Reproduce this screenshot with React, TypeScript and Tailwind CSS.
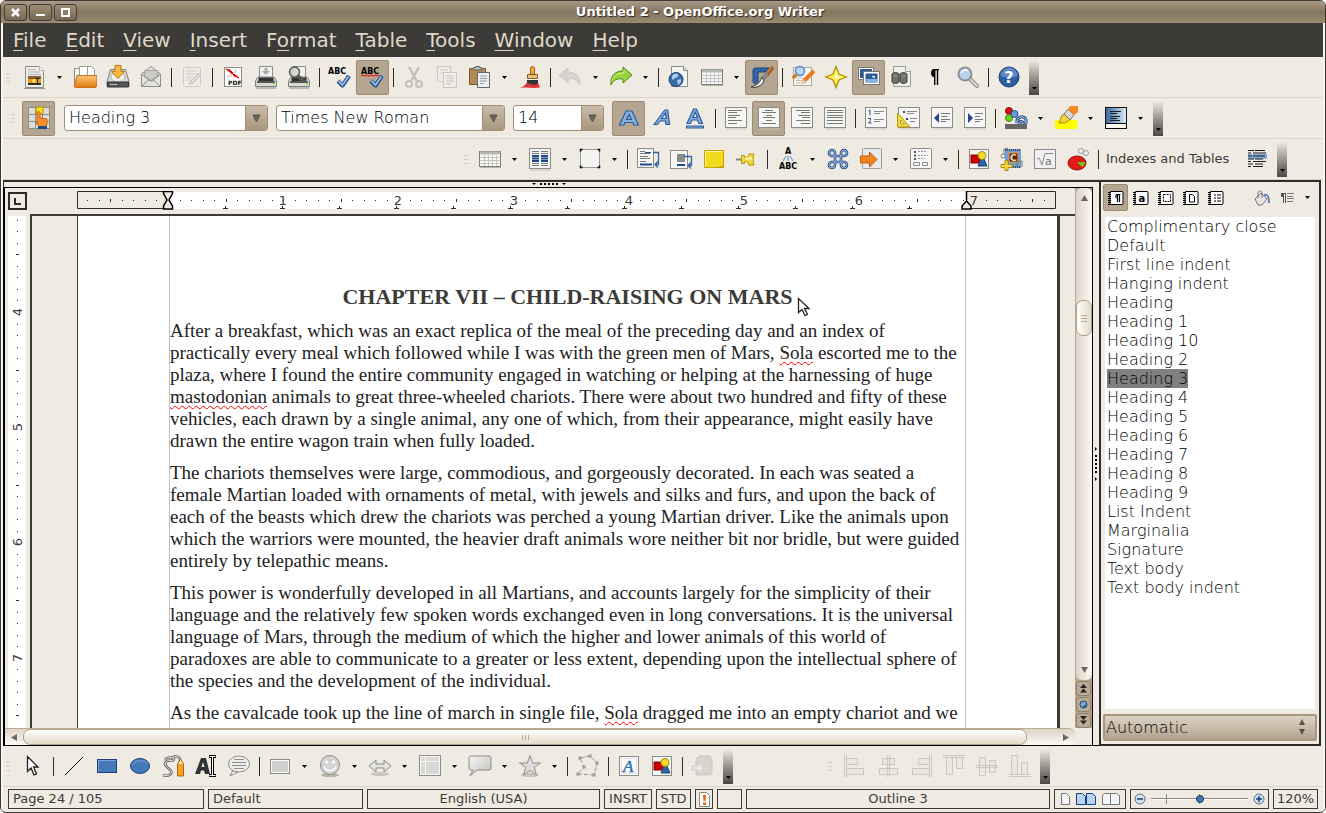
import type { ReactNode } from 'react'
import { clsx } from 'clsx'

const MENUS = ['File', 'Edit', 'View', 'Insert', 'Format', 'Table', 'Tools', 'Window', 'Help']
// position of the underlined access key
const ACCESS_KEY: Record<string, number> = { Format: 1 }

const STYLES = [
  'Complimentary close', 'Default', 'First line indent', 'Hanging indent', 'Heading', 'Heading 1',
  'Heading 10', 'Heading 2', 'Heading 3', 'Heading 4', 'Heading 5', 'Heading 6', 'Heading 7',
  'Heading 8', 'Heading 9', 'List Indent', 'Marginalia', 'Signature', 'Text body', 'Text body indent',
]

const PARAGRAPHS = [
  [
    'After a breakfast, which was an exact replica of the meal of the preceding day and an index of',
    'practically every meal which followed while I was with the green men of Mars, Sola escorted me to the',
    'plaza, where I found the entire community engaged in watching or helping at the harnessing of huge',
    'mastodonian animals to great three-wheeled chariots. There were about two hundred and fifty of these',
    'vehicles, each drawn by a single animal, any one of which, from their appearance, might easily have',
    'drawn the entire wagon train when fully loaded.',
  ],
  [
    'The chariots themselves were large, commodious, and gorgeously decorated. In each was seated a',
    'female Martian loaded with ornaments of metal, with jewels and silks and furs, and upon the back of',
    'each of the beasts which drew the chariots was perched a young Martian driver. Like the animals upon',
    'which the warriors were mounted, the heavier draft animals wore neither bit nor bridle, but were guided',
    'entirely by telepathic means.',
  ],
  [
    'This power is wonderfully developed in all Martians, and accounts largely for the simplicity of their',
    'language and the relatively few spoken words exchanged even in long conversations. It is the universal',
    'language of Mars, through the medium of which the higher and lower animals of this world of',
    'paradoxes are able to communicate to a greater or less extent, depending upon the intellectual sphere of',
    'the species and the development of the individual.',
  ],
  ['As the cavalcade took up the line of march in single file, Sola dragged me into an empty chariot and we'],
]

const INCH = 115.2

/* ---------- icons ---------- */

function Ico({ children, dim }: { children: ReactNode; dim?: boolean }) {
  return (
    <svg width="24" height="24" viewBox="0 0 24 24" fill="none" className={clsx('shrink-0', dim && 'opacity-35')}>
      {children}
    </svg>
  )
}

function Frame({ children }: { children?: ReactNode }) {
  return (
    <Ico>
      <rect x="1.500" y="1.500" width="21" height="20" fill="#f6f6f4" stroke="#8b8d88" />
      <path d="M2.500 23h20" stroke="#c9c4ba" />
      {children}
    </Ico>
  )
}

const NewDoc = () => (
  <Ico>
    <path d="M2.500 1.500h14l4 4v17h-18z" fill="#ececea" stroke="#8b8d88" />
    <path d="M16.500 1.500v4h4" fill="#fff" stroke="#b5b7b3" />
    <path d="M5 4.500h8M5 7h12M5 9.500h13" stroke="#b5b7b3" />
    <rect x="5" y="11" width="13" height="9" fill="#85602a" />
    <path d="M5 14h13v4H5z" fill="#e9991c" />
    <circle cx="11" cy="16" r="2" fill="#ffd75a" />
    <path d="M5 18h13v2H5z" fill="#2f3020" />
    <path d="M14.500 13v6M12.500 13.500h4" stroke="#2d1d05" />
    <path d="M1 23.500h21" stroke="#9a968e" />
  </Ico>
)
const OpenDoc = () => (
  <Ico>
    <path d="M1.500 21V3.500h7l1 2h5V2.500h4l3 3v7" fill="#f3f3f1" stroke="#8b8d88" />
    <path d="M6.500 1.500h8l3 3v7h-11z" fill="#fff" stroke="#9a9c97" />
    <path d="M14.500 1.500h4l3 3v6h-7z" fill="#fff" stroke="#9a9c97" />
    <path d="M1 21.500l3-11h20l-.500 11-1 1h-20z" fill="url(#folder)" stroke="#c8701a" />
    <defs>
      <linearGradient id="folder" x1="0" y1="0" x2="0" y2="1">
        <stop stopColor="#fbc878" /><stop offset="1" stopColor="#e0780f" />
      </linearGradient>
    </defs>
  </Ico>
)
const SaveDoc = () => (
  <Ico>
    <path d="M4.500 4.500h15l3.500 12v5h-22v-5z" fill="#d5d7d3" stroke="#7f817c" />
    <ellipse cx="12" cy="12" rx="7" ry="5" fill="#eeeeec" stroke="#b0b2ae" />
    <path d="M1.500 17h21v5h-21z" fill="#555753" stroke="#2e3436" />
    <path d="M4 19.500h7" stroke="#babdb6" />
    <path d="M9 .500h6v6h3.500L12 13.500 5.500 6.500H9z" fill="#f9b93c" stroke="#b8770d" />
  </Ico>
)
const Mail = () => (
  <Ico>
    <path d="M2.500 9L12 1.500 21.500 9v12.500h-19z" fill="#e3e4e1" stroke="#8b8d88" />
    <path d="M5.500 5.500h13v6L12 15.500 5.500 11.500z" fill="#c9cbc7" stroke="#9fa19c" />
    <path d="M3 9.500l8 6.500h2l8-6.500M3 21l6.500-6M21 21l-6.500-6" stroke="#8b8d88" />
  </Ico>
)
const EditDoc = () => (
  <Ico dim>
    <rect x="3.500" y="2.500" width="17" height="19" rx="1" fill="#eee" stroke="#999" />
    <path d="M6 6h10M6 9h12M6 12h8M6 15h5" stroke="#999" />
    <path d="M19 8l2 2-8 8-3.500 1L11 16z" fill="#ccc" stroke="#666" />
  </Ico>
)
const Pdf = () => (
  <Ico>
    <rect x="3.500" y="2.500" width="17" height="19" fill="#fff" stroke="#8b8d88" />
    <path d="M5 4l4 1 4 4 5 4-5-2-3-3z" fill="#e01010" stroke="#e01010" />
    <path d="M15 4c-1 4-4 7-9 8" stroke="#f19a9a" />
    <rect x="7" y="14" width="13" height="7" fill="#fff" />
    <text x="7" y="20" fontSize="6" fontWeight="bold" fontFamily="DejaVu Sans" fill="#111">PDF</text>
  </Ico>
)
function Printer({ preview }: { preview?: boolean }) {
  return (
    <Ico>
      <path d="M5.500 1.500h13v11h-13z" fill="#f2f2f0" stroke="#8b8d88" />
      {!preview && <path d="M10.500 3h3v3h2.500l-4 4-4-4h2.500z" fill="#a9aba7" />}
      <path d="M4 12h16l2.500 4v5.500h-21V16z" fill="#d9dad6" stroke="#7f817c" />
      <path d="M4.500 12.500h15v4h-15z" fill="#2e3436" />
      <path d="M3 17h18" stroke="#555753" strokeWidth="2" />
      <circle cx="20" cy="18.500" r="1" fill="#73d216" />
      <path d="M2 23h20" stroke="#888a85" />
      {preview && (
        <>
          <path d="M10 10l8 7" stroke="#555753" strokeWidth="3" />
          <circle cx="7.500" cy="7" r="5" fill="#cfd1cd" fillOpacity=".8" stroke="#555753" strokeWidth="1.500" />
        </>
      )}
    </Ico>
  )
}
function Spell({ auto }: { auto?: boolean }) {
  return (
    <Ico>
      <text x="0" y="9" fontSize="8" fontWeight="bold" fontFamily="DejaVu Sans" fill="#000">ABC</text>
      {auto && <path d="M0 11l2-1 2 1 2-1 2 1 2-1 2 1 2-1 2 1 2-1" stroke="#e00" />}
      <path d="M10 16l4.500 4.500L21 11" stroke="#204a87" strokeWidth="4" strokeLinejoin="round" />
      <path d="M10.500 16l4 4L20.500 11.500" stroke="#8db8e8" strokeWidth="2" />
    </Ico>
  )
}
const Cut = () => (
  <Ico dim>
    <path d="M7 2l8 14M17 2L9 16" stroke="#777" strokeWidth="2.500" />
    <circle cx="7" cy="19" r="3" stroke="#777" strokeWidth="2" />
    <circle cx="17" cy="19" r="3" stroke="#777" strokeWidth="2" />
  </Ico>
)
const Copy = () => (
  <Ico dim>
    <path d="M2.500 1.500h13v15h-13z" fill="#eee" stroke="#888" />
    <path d="M5 5h8M5 8h3" stroke="#999" />
    <path d="M8.500 7.500h13v15h-13z" fill="#eee" stroke="#888" />
    <path d="M11 11h8M11 13.500h8M11 16h8M11 18.500h5" stroke="#888" />
  </Ico>
)
const Paste = () => (
  <Ico>
    <path d="M1.500 3.500h16v16h-16z" fill="#b18a55" stroke="#7c5a2a" />
    <path d="M5.500 5V2.500h2v-1h4v1h2V5z" fill="#babdb6" stroke="#666" />
    <path d="M9.500 7.500h12v15h-12z" fill="#eef0f4" stroke="#666864" />
    <path d="M12 11h7M12 13.500h7M12 16h7M12 18.500h4" stroke="#8a96ab" />
  </Ico>
)
const Brush = () => (
  <Ico>
    <path d="M1 22.500c5 0 7-4 8-5h11l2 5c-5 1-14 0-21 0z" fill="#e0303a" />
    <path d="M12.500 9V3c0-2 4-2 4 0v6z" fill="#f3a841" stroke="#a86412" />
    <path d="M9.500 9.500h10v4h-10z" fill="#e5c07c" stroke="#8c5d1d" />
    <path d="M9 14h11v4l-3 2-8-2z" fill="#2e3436" />
    <path d="M9 14.500h11" stroke="#eee" />
  </Ico>
)
const Undo = () => (
  <Ico dim>
    <path d="M0 10l9-7v4c7 0 12 4 12 13-2-5-6-7-12-6v4z" fill="#aaa" stroke="#888" />
  </Ico>
)
const Redo = () => (
  <Ico>
    <path d="M23 10l-9-8v4C6 6 1 11 2 20c2-5 6-7 12-6v4z" fill="#97d43c" stroke="#4e8a0b" />
    <path d="M15 5v3C8 8 4 11 3 16" stroke="#cdf08d" />
  </Ico>
)
const Hyperlink = () => (
  <Ico>
    <path d="M4.500 1.500h12l4 4v16h-16z" fill="#f4f4f2" stroke="#8b8d88" />
    <path d="M16.500 1.500v4h4" fill="#ddd" stroke="#8b8d88" />
    <circle cx="9" cy="14.500" r="7" fill="#3a6ca8" stroke="#1c4378" />
    <path d="M5 11c2-3 5-3 6-1s-2 3-3 3-1 3-3 1zM10 15l4-1c1 2-1 5-3 6z" fill="#a9c8e8" />
  </Ico>
)
const Grid = () => (
  <Ico>
    <rect x="1.500" y="4.500" width="21" height="15" fill="#fafaf9" stroke="#7f817c" />
    <path d="M2 6h20" stroke="#b5b7b3" strokeWidth="3" />
    <path d="M2 10.500h20M2 13.500h20M2 16.500h20M6.500 8v11M10.500 8v11M14.500 8v11M18.500 8v11" stroke="#c3c5c1" />
    <path d="M2 20.500h21" stroke="#b5b2aa" />
  </Ico>
)
const DrawBrush = () => (
  <Ico>
    <path d="M5 3h16c0 3-2 4-5 4H8v10c-2 2-4 2-5 0V6c0-2 1-3 2-3z" fill="#3465a4" stroke="#1d4277" />
    <path d="M23 2l-7 9" stroke="#a8622a" strokeWidth="4" />
    <path d="M21 2l-6 8" stroke="#e39b55" />
    <path d="M17 9l-4 5" stroke="#888a85" strokeWidth="5" />
    <path d="M12 12c-2 5-4 8-11 10 5 1 10 0 13-6z" fill="#f3f3f1" stroke="#3a3a38" />
  </Ico>
)
const FindReplace = () => (
  <Ico>
    <rect x="2.500" y="2.500" width="18" height="18" fill="#f6f6f4" stroke="#a5a7a3" />
    <path d="M5 13h8M5 15.500h9M5 18h10" stroke="#babdb6" />
    <circle cx="9" cy="6" r="4.500" fill="#bcd5f0" stroke="#5b87bd" strokeWidth="1.500" />
    <path d="M5.500 10L1.500 13" stroke="#c17d11" strokeWidth="3" />
    <path d="M23 6L13 16" stroke="#f07818" strokeWidth="4" />
    <path d="M12 14l3 3-5 2z" fill="#e8c79a" />
  </Ico>
)
const Navigator = () => (
  <Ico>
    <path d="M12 1.500l3 7.500 7.500 3-7.500 3-3 7.500-3-7.500-7.500-3 7.500-3z" fill="#fbe94e" stroke="#b09208" strokeWidth="1.300" />
    <path d="M12 4l1.500 6.500L12 12zM20 12l-6.500 1.500L12 12z" fill="#fffbd0" />
    <circle cx="12" cy="12" r="1.500" fill="#fff" />
  </Ico>
)
const Gallery = () => (
  <Ico>
    <rect x="1.500" y="2.500" width="15" height="12" fill="#fff" stroke="#777" />
    <rect x="3" y="4" width="12" height="9" fill="#2c5a98" />
    <rect x="6.500" y="6.500" width="16" height="13" fill="#fff" stroke="#777" />
    <rect x="8.500" y="8.500" width="12" height="9" fill="#2c5a98" />
    <path d="M9 17v-3h11v3z" fill="#88b4e2" />
    <path d="M15 11l3 1-2 1" stroke="#fff" />
  </Ico>
)
const DataSources = () => (
  <Ico>
    <path d="M3.500 1.500h12l5 5v15h-17z" fill="#efefed" stroke="#9a9c97" />
    <path d="M15.500 1.500v5h5" fill="#fff" stroke="#9a9c97" />
    <path d="M2 9c2-2 5-2 7 0v8c-2 2-5 2-7 0zM10 9c2-2 5-2 7 0v8c-2 2-5 2-7 0z" fill="#6f716d" stroke="#3c3d3a" />
    <path d="M3 10.500c2 1 3 1 5 0M11 10.500c2 1 3 1 5 0" stroke="#999" />
  </Ico>
)
const Pilcrow = () => (
  <Ico>
    <path d="M11 4h5v1.200h-.800V20h-1.400V5.200h-1.400V20H11v-8c-4 0-4-8 0-8z" fill="#000" />
  </Ico>
)
const Zoom = () => (
  <Ico>
    <path d="M14 14l7 7" stroke="#8b8d88" strokeWidth="4" strokeLinecap="round" />
    <path d="M14 14l7 7" stroke="#dcdcda" strokeWidth="2" strokeLinecap="round" />
    <circle cx="9" cy="9" r="6.500" fill="#b7d0ec" stroke="#8b9199" strokeWidth="2" />
    <path d="M5 8c1-3 5-4 7-2" stroke="#fff" strokeWidth="1.500" />
  </Ico>
)
const Help = () => (
  <Ico>
    <circle cx="12" cy="12" r="10" fill="#2e5fa3" stroke="#163d75" />
    <path d="M3.500 11a8.500 8.500 0 0117 0c-5 2-12 2-17 0z" fill="#5e8ac4" />
    <text x="12" y="18" textAnchor="middle" fontSize="16" fontWeight="bold" fontFamily="DejaVu Sans" fill="#fff">?</text>
  </Ico>
)

const StylesIcon = () => (
  <Ico>
    <rect x="1.500" y="1.500" width="21" height="21" fill="#dcdcda" stroke="#8b8d88" />
    <path d="M2 8.500h20M2 15.500h20M8.500 2v20M15.500 2v20" stroke="#8b8d88" />
    <rect x="9" y="1" width="7" height="7" fill="#fce113" stroke="#b09208" />
    <path d="M10 18V7c0-2 3-2 3 0v5l7 1v6l-2 2h-6l-3-5z" fill="#f7902a" stroke="#c3600c" />
    <rect x="11" y="20" width="9" height="3" fill="#204a87" />
  </Ico>
)
function BlueA({ kind }: { kind: 'b' | 'i' | 'u' }) {
  return (
    <Ico>
      <g transform={kind === 'i' ? 'translate(5 1) skewX(-16)' : undefined}>
        <path
          d={kind === 'b'
            ? 'M2.500 19L9 5h6l6.500 14h-4.500l-1-2.500H8L7 19zM9.500 13.500h5L12 8.500z'
            : 'M4 17.500L10.500 3h3l6 14.500h-3.500l-1.500-3.500H9l-1.500 3.500zM10 11.500h4.500L12 6z'}
          fill="#86aede" fillRule="evenodd" stroke="#2b5b9f" strokeWidth="1.200"
        />
      </g>
      {kind === 'u' && <path d="M3 21h18" stroke="#2b5b9f" strokeWidth="3" />}
      {kind === 'u' && <path d="M4 21h16" stroke="#86aede" />}
    </Ico>
  )
}
const AlignLeft = () => <Frame><path d="M4 4.500h14M4 6.500h9M4 9.500h12M4 11.500h8M4 14.500h14M4 17.500h9" stroke="#777975" /></Frame>
const AlignCenter = () => <Frame><path d="M8 4.500h8M5 6.500h14M9 9.500h6M6 11.500h12M9 14.500h6M5 17.500h14" stroke="#777975" /></Frame>
const AlignRight = () => <Frame><path d="M6 4.500h14M11 6.500h9M8 9.500h12M12 11.500h8M6 14.500h14M11 17.500h9" stroke="#777975" /></Frame>
const AlignJustify = () => <Frame><path d="M4 4.500h16M4 6.500h16M4 9.500h16M4 11.500h16M4 14.500h16M4 17.500h16" stroke="#777975" /></Frame>
const Numbering = () => (
  <Frame>
    <path d="M10 5.500h10M10 7.500h6M10 13.500h10M10 15.500h6" stroke="#888a85" />
    <path d="M6 4v5M4.500 5l1.500-1M4 12.500h2.500v2L4.500 17h3" stroke="#204a87" />
  </Frame>
)
const Bullets = () => (
  <Frame>
    <path d="M10 5.500h10M10 7.500h7M13 12.500h7M13 15.500h5" stroke="#888a85" />
    <path d="M6 6h2M9 13h2" stroke="#444" strokeWidth="2" />
    <path d="M.500 7v14H13z" fill="#f5dc3c" stroke="#b8960a" />
    <path d="M3.500 14v4h4z" fill="#f6f6f4" stroke="#b8960a" />
  </Frame>
)
const Outdent = () => <Frame><path d="M4 12l5-5v10z" fill="#204a87" /><path d="M11 7.500h9M11 10.500h6M11 13.500h9M11 15.500h5" stroke="#777975" /></Frame>
const Indent = () => <Frame><path d="M10 12L5 7v10z" fill="#204a87" /><path d="M12 7.500h8M12 10.500h5M12 13.500h8M12 15.500h5" stroke="#777975" /></Frame>
const FontColor = () => (
  <Ico>
    <circle cx="5" cy="5" r="3.500" fill="#d41118" stroke="#860a0e" />
    <circle cx="5" cy="12" r="3.500" fill="#6ed216" stroke="#3f8a0b" />
    <circle cx="10.500" cy="8" r="3.500" fill="#6b9bd6" stroke="#204a87" />
    <path d="M13 17c-1-7 8-8 9-3v4M15 18c1-4 4-3 4 0" stroke="#204a87" strokeWidth="3" />
    <path d="M13 17c-1-7 8-8 9-3v4M15 18c1-4 4-3 4 0" stroke="#d3e3f5" />
    <rect x="1" y="18" width="22" height="5" fill="#666" />
  </Ico>
)
const Highlight = () => (
  <Ico>
    <rect x="1" y="14" width="22" height="9" fill="#ff0" />
    <path d="M5 17l3-8 7-2 2 6-6 4z" fill="#f3d437" stroke="#a88a0a" />
    <path d="M10 8l4-5 6 6-4 5z" fill="#d3d5d1" stroke="#777" />
    <path d="M14 3l2-3h8v6l-4 3z" fill="#f78b1f" />
  </Ico>
)
const BackColor = () => (
  <Ico>
    <rect x="1.500" y="1.500" width="21" height="16" fill="url(#bg)" stroke="#111" />
    <path d="M6 5.500h11M6 7.500h7M6 10.500h10M6 12.500h7M6 14.500h10" stroke="#1c1c1c" />
    <rect x="1.500" y="17.500" width="21" height="5" fill="#f7f5f2" stroke="#000" />
    <defs>
      <linearGradient id="bg"><stop stopColor="#3465a4" /><stop offset="1" stopColor="#e3ecf7" /></linearGradient>
    </defs>
  </Ico>
)

const SectionIcon = () => (
  <Frame>
    <path d="M4 4.500h7M13 4.500h7M4 6.500h7M13 6.500h7M4 16.500h7M13 16.500h7M4 18.500h7M13 18.500h7" stroke="#777975" />
    <path d="M4 9h7M13 9h7M4 11.500h7M13 11.500h7M4 14h7M13 14h7" stroke="#204a87" strokeWidth="1.800" />
  </Frame>
)
const FrameIcon = () => (
  <Ico>
    <rect x="2.500" y="2.500" width="19" height="18" fill="#f4f4f3" stroke="#9a9c97" />
    <path d="M2.500 4.500v-2h2M19.500 2.500h2v2M21.500 18.500v2h-2M4.500 20.500h-2v-2" stroke="#000" strokeWidth="1.500" />
  </Ico>
)
const Footnote = () => (
  <Ico>
    <rect x="1.500" y="1.500" width="16" height="19" fill="#f6f6f4" stroke="#8b8d88" />
    <path d="M4 4.500h5M4 6.500h10M4 9.500h8M4 11.500h10M4 14.500h6" stroke="#777975" />
    <path d="M4 17.500h12" stroke="#204a87" strokeWidth="2" />
    <path d="M9 5.500h6" stroke="#204a87" />
    <path d="M17 5.500h5.500v12H20M22 14.500l-3 3 3 3" stroke="#3465a4" strokeWidth="1.300" />
  </Ico>
)
const Caption = () => (
  <Ico>
    <rect x="1.500" y="3.500" width="17" height="18" fill="#f6f6f4" stroke="#8b8d88" />
    <rect x="8" y="7" width="8" height="8" fill="#8b8d88" />
    <path d="M8 18h8" stroke="#204a87" strokeWidth="2" />
    <path d="M15 9.500h7.500v9H20M22 15.500l-3 3 3 3" stroke="#3465a4" strokeWidth="1.300" />
  </Ico>
)
const Note = () => (
  <Ico>
    <path d="M2.500 3.500h19v17h-19z" fill="#f3da1c" stroke="#c4a000" />
    <path d="M3.500 19.500v-15h17" stroke="#fdf6a0" />
    <path d="M16 20.500c3 0 4-1 5-2" stroke="#a88a0a" />
  </Ico>
)
const Pin = () => (
  <Ico>
    <path d="M1 12.500h8" stroke="#888a85" strokeWidth="2" />
    <path d="M6.500 8.500h3v2c3 0 4-1 4.500-3.500h5c-1 4-1 7 0 11h-5c-.500-2.500-1.500-3.500-4.500-3.500v2h-3z" fill="#f5d93a" stroke="#b8960a" />
    <path d="M10 11.500h7" stroke="#fff7b0" strokeWidth="2" />
  </Ico>
)
const Index = () => (
  <Ico>
    <text x="9" y="7" fontSize="8" fontWeight="bold" fontFamily="DejaVu Sans" fill="#000">A</text>
    <path d="M10 9l-3 5M12 9v5M14 9l3 5" stroke="#5b87bd" />
    <text x="3" y="22" fontSize="8" fontWeight="bold" fontFamily="DejaVu Sans" fill="#000">ABC</text>
  </Ico>
)
const LOOPS = 'M9 9h6v6H9zM9 9H6a3 3 0 113-3zM15 9h3a3 3 0 10-3-3zM9 15H6a3 3 0 103 3zM15 15h3a3 3 0 11-3 3z'
const Bookmark = () => (
  <Ico>
    <path d={LOOPS} stroke="#204a87" strokeWidth="2.600" />
    <path d={LOOPS} stroke="#b9d4f5" strokeWidth=".800" />
  </Ico>
)
const GotoIcon = () => (
  <Ico>
    <rect x="3.500" y="1.500" width="19" height="20" rx="1" fill="#e9eaee" stroke="#9a9c97" />
    <path d="M1.500 9h9V5l7.500 7.500-7.500 7.500v-4h-9z" fill="#f5841f" stroke="#c05a08" />
  </Ico>
)
const FormIcon = () => (
  <Ico>
    <rect x="1.500" y="1.500" width="21" height="20" rx="1" fill="#f6f6f4" stroke="#8b8d88" />
    <path d="M5 5h2M5 8.500h2M5 12h2" stroke="#555" strokeWidth="2" />
    <path d="M9 4.500h8M9 8.500h10M9 11.500h7" stroke="#999" strokeDasharray="2 1" />
    <path d="M4.500 15.500h6v3h-6zM13.500 15.500h5v3h-5z" stroke="#888a85" />
  </Ico>
)
const Shapes = () => (
  <Ico>
    <rect x="2.500" y="2.500" width="19" height="19" fill="#f6f6f4" stroke="#8b8d88" />
    <rect x="4" y="8" width="9" height="8" fill="#cc0000" stroke="#8a0000" />
    <path d="M11 19l3-7h3l3 7z" fill="#3465a4" stroke="#1d4277" />
    <circle cx="15" cy="8.500" r="4" fill="#f6dd2c" stroke="#a88a0a" />
  </Ico>
)
const Media = () => (
  <Ico>
    <rect x="5" y="2" width="16" height="19" fill="#6f9fd4" />
    <path d="M5 3h16M5 20h16" stroke="#444" strokeWidth="2" strokeDasharray="1 1" />
    <rect x="9" y="6" width="9" height="9" fill="#5a2308" stroke="#f29a3a" />
    <text x="10" y="14" fontSize="9" fontWeight="bold" fontFamily="DejaVu Sans" fill="#f7e3c2">C</text>
    <path d="M4 9V2l4-1M17 20v-5l5-1v6" stroke="#777" />
    <circle cx="3" cy="9" r="2" fill="#fff" stroke="#777" />
    <path d="M5 13.500h3v4h4v3H8v3H5v-3H1v-3h4z" fill="#f5dc3c" stroke="#a88a0a" />
  </Ico>
)
const Formula = () => (
  <Ico>
    <rect x="1.500" y="2.500" width="21" height="19" fill="#f0f0ee" stroke="#8b8d88" />
    <path d="M4 12l2-1 3 7 3-11.500h8" stroke="#888a85" />
    <text x="12" y="17.500" fontSize="11" fontFamily="DejaVu Sans" fill="#777">a</text>
  </Ico>
)
const Chart = () => (
  <Ico>
    <ellipse cx="11" cy="16" rx="9" ry="7" fill="#e01b1b" stroke="#a00808" />
    <path d="M11 15h8c0 3-1 4-3 5z" fill="#6ec41a" />
    <circle cx="15" cy="4" r="2.500" stroke="#999" fill="#f4f4f4" />
    <circle cx="20" cy="6" r="2.500" stroke="#999" fill="#f4f4f4" />
  </Ico>
)
const IndexList = () => (
  <Ico>
    <rect x="3" y="7" width="19" height="5" fill="#86aede" />
    <path d="M3 3.500h6M10 3.500h10M3 6h3M8 6h13M3 9h4M8 9h12M3 12h6M10 12h8M3 14.500h3M8 14.500h13M3 17h5M10 17h8M3 19.500h3M8 19.500h10" stroke="#161616" />
  </Ico>
)

const PointerIcon = () => (
  <Ico><path d="M6.500 2.500v15l3.500-3.500 3 7 2.500-1-3-7H17z" fill="#fff" stroke="#222" strokeWidth="1.300" /></Ico>
)
const LineIcon = () => <Ico><path d="M3 21L21 3" stroke="#111" /></Ico>
const RectIcon = () => <Ico><rect x="2.500" y="5.500" width="19" height="13" fill="#4478b8" stroke="#1d4277" /><path d="M3.500 17.500v-11h17" stroke="#7ba5d8" /></Ico>
const EllipseIcon = () => <Ico><ellipse cx="12" cy="12" rx="9.500" ry="7.500" fill="#4478b8" stroke="#1d4277" /><path d="M4 11c2-5 13-6 16-1" stroke="#7ba5d8" /></Ico>
const SQUIGGLE = 'M2 21c5 2 10-1 8-4S2 11 5 8s8 0 8-3-7-2-9 1M11 4c3-3 9-2 8 4'
const Freeform = () => (
  <Ico>
    <path d={SQUIGGLE} stroke="#666" strokeWidth="2.600" />
    <path d={SQUIGGLE} stroke="#eee" />
    <path d="M16.500 22V10l3-5 3 5v12z" fill="#f5a21c" stroke="#a86412" />
    <path d="M17 10l2.500-4 2.500 4z" fill="#f3dfb8" />
  </Ico>
)
const TextTool = () => (
  <Ico>
    <path d="M1 20L7 4h5l4 16h-5l-1-3.500H7L6 20zM7.500 13h3L9 8z" fill="#2e3436" fillRule="evenodd" />
    <path d="M15 2.500h7M18.500 3v18M15 21.500h7" stroke="#000" strokeWidth="3" />
    <path d="M15.500 2.500h6M18.500 3v18M15.500 21.500h6" stroke="#fff" />
  </Ico>
)
const Callout = () => (
  <Ico>
    <path d="M6 16l-3 6 8-4z" fill="#eee" stroke="#8b8d88" />
    <ellipse cx="12" cy="10" rx="10.500" ry="8" fill="#eeeeec" stroke="#8b8d88" />
    <path d="M7 5.500h10M5 8.500h14M5 11.500h14M7 14.500h10" stroke="#8b8d88" />
  </Ico>
)
const GreyRect = () => <Ico><rect x="2.500" y="5.500" width="19" height="14" fill="#cfd0ce" stroke="#8b8d88" /><path d="M3.500 18.500v-12h17v12z" stroke="#f6f6f4" /></Ico>
const Smiley = () => (
  <Ico>
    <ellipse cx="12" cy="21" rx="9" ry="2" fill="#b9b4aa" />
    <circle cx="12" cy="11" r="9.500" fill="#d3d4d2" stroke="#8b8d88" />
    <circle cx="8.500" cy="8" r="1.500" fill="#fff" /><circle cx="15.500" cy="8" r="1.500" fill="#fff" />
    <path d="M6 13c3 5 9 5 12 0" stroke="#fff" strokeWidth="1.500" />
  </Ico>
)
const Arrows = () => (
  <Ico>
    <ellipse cx="12" cy="20" rx="9" ry="2" fill="#c9c4ba" />
    <path d="M1 12l7-6v4h8V6l7 6-7 6v-4H8v4z" fill="#e2e3e0" stroke="#8b8d88" />
  </Ico>
)
const Flow = () => (
  <Ico>
    <rect x="1.500" y="1.500" width="21" height="20" fill="#d8d9d7" stroke="#8b8d88" />
    <path d="M2.500 2.500h19v18h-19zM7.500 3v18M3 7.500h18" stroke="#fafaf9" />
  </Ico>
)
const Bubble = () => (
  <Ico>
    <path d="M3 2h18c1.500 0 2 1 2 2v10c0 1.500-1 2-2 2H9l-7 6 3-6H3c-1.500 0-2-1-2-2V4c0-1.500 1-2 2-2z" fill="url(#bubble)" stroke="#8b8d88" />
    <defs>
      <linearGradient id="bubble" x1="0" y1="0" x2="1" y2="1"><stop stopColor="#f4f4f3" /><stop offset="1" stopColor="#bdbebb" /></linearGradient>
    </defs>
  </Ico>
)
const Star = () => (
  <Ico>
    <ellipse cx="12" cy="21" rx="9" ry="2" fill="#c9c4ba" />
    <path d="M12 1.500l2.700 7.500h7.800l-6.300 4.500 2.400 7.500-6.600-4.500L5.400 21l2.400-7.500L1.500 9h7.800z" fill="#dcdddb" stroke="#8b8d88" />
  </Ico>
)
const Points = () => (
  <Ico>
    <path d="M4 4l10-2 7 7-3 13" stroke="#9a9c97" strokeDasharray="5 1" />
    <path d="M18 21l-16-1 6-7L4 4" stroke="#9a9c97" strokeDasharray="4 2" />
    {[[4, 4], [14, 2], [21, 9], [18, 21], [2, 20], [8, 13]].map(([x, y]) => (
      <rect key={`${x}-${y}`} x={x - 1} y={y - 1} width="2" height="2" fill="#efebe3" stroke="#8b8d88" />
    ))}
  </Ico>
)
const Fontwork = () => (
  <Ico>
    <rect x="2.500" y="2.500" width="19" height="19" fill="#fbfbfa" stroke="#8b8d88" />
    <rect x="4.500" y="4.500" width="15" height="15" stroke="#c9cac8" strokeDasharray="1 1" />
    <text x="6" y="18" fontSize="17" fontStyle="italic" fontFamily="Liberation Serif" fill="#2f6fb8" stroke="#2f6fb8" strokeWidth=".500">A</text>
  </Ico>
)
const Extrude = () => (
  <Ico dim>
    <path d="M5 5l3-3h11l2 3v15l-2 1H5z" fill="#aaa" stroke="#888" />
    <path d="M1 12h6V8l6 6-6 6v-4H1z" fill="#ddd" stroke="#999" />
  </Ico>
)
function AlignObj({ d }: { d: string }) {
  return <Ico dim><path d={d} fill="#e5e2db" stroke="#888a85" /></Ico>
}

/* ---------- toolbar pieces ---------- */

function Tool({ label, active, menu, children }: { label: string; active?: boolean; menu?: boolean; children: ReactNode }) {
  return (
    <>
      <button
        aria-label={label}
        className={clsx(
          'flex h-[35px] w-[33px] shrink-0 items-center justify-center rounded-[2px] border',
          active ? 'border-[#9c8a72] bg-[#b5a691]' : 'border-transparent',
        )}
      >
        {children}
      </button>
      {menu && (
        <button aria-label={`${label} options`} className="flex h-[35px] w-[17px] shrink-0 items-center justify-center">
          <Down />
        </button>
      )}
    </>
  )
}

const Down = () => <svg width="5" height="3" viewBox="0 0 5 3"><path d="M0 0h5L2.500 3z" fill="#000" /></svg>

const Sep = () => <div className="mr-[3px] ml-[4px] h-[19px] w-px shrink-0 bg-[#2b2a27]" />

const Grip = () => (
  <div className="flex w-[4px] shrink-0 flex-col gap-[3px]">
    <div className="h-px bg-[#d8cfb8]" />
    <div className="h-px bg-[#d8cfb8]" />
    <div className="h-px bg-[#d8cfb8]" />
  </div>
)

const More = () => (
  <button aria-label="More controls" className="ml-1 flex h-[35px] w-[10px] shrink-0 items-end justify-center bg-linear-to-b from-[#efebe3] to-[#4a4945] pb-[5px]">
    <Down />
  </button>
)

function Bar({ children, className }: { children: ReactNode; className?: string }) {
  return (
    <div className={clsx('flex h-[41px] shrink-0 items-center overflow-hidden border-b border-[#ddd6c6]', className)}>
      {children}
    </div>
  )
}

function Combo({ label, value, className }: { label: string; value: string; className: string }) {
  return (
    <div className={clsx('mr-2 flex h-[26px] shrink-0 overflow-hidden rounded-[3px] border border-[#a08f74] bg-white', className)}>
      <input aria-label={label} defaultValue={value} className="min-w-0 flex-1 bg-transparent pl-1 text-base font-light text-black outline-none" />
      <button aria-label={`${label} list`} className="flex w-[22px] items-center justify-center border-l border-[#a08f74] bg-linear-to-b from-[#c9bca9] to-[#a8977f]">
        <svg width="9" height="9" viewBox="0 0 9 9"><path d="M1 1h7L4.500 8z" fill="#6b6253" stroke="#5b5447" /></svg>
      </button>
    </div>
  )
}

function WinButton({ label, children }: { label: string; children: ReactNode }) {
  return (
    <button aria-label={label} className="flex h-[17px] w-[23px] items-center justify-center rounded-[3px] border border-[#453d32] bg-linear-to-b from-[#9d8d77] to-[#766853]">
      <svg width="11" height="11" viewBox="0 0 11 11" fill="none">{children}</svg>
    </button>
  )
}

/* ---------- rulers ---------- */

function HRuler() {
  const zero = 91
  const ticks = Array.from({ length: 86 }, (_, i) => i - 8)
  return (
    <svg width="980" height="20" className="shrink-0">
      <rect x="91" y="1" width="798" height="17" fill="#fff" />
      <path d="M91 .500H.500v17H91M889 .500h89.500v17H889" fill="none" stroke="#2e2c28" />
      {ticks.map(i => {
        const x = Math.round(zero + (i * INCH) / 10)
        if (i === 0 || x > 972) return null
        if (i % 10 === 0) {
          return (
            <text key={i} x={x} y="14" textAnchor="middle" fontSize="13" fontFamily="DejaVu Sans" fill="#3c3b37">
              {i / 10}
            </text>
          )
        }
        return <rect key={i} x={x} y={i % 5 === 0 ? 8 : 9} width="1" height={i % 5 === 0 ? 3 : 1} fill="#2e2c28" />
      })}
      {/* default tab stops */}
      {Array.from({ length: 13 }, (_, i) => Math.round(zero + ((i + 1) * 114) / 2)).map(x => (
        <path key={x} d={`M${x - 2} 17.500h5M${x + .5} 15v2`} stroke="#2e2c28" />
      ))}
      <path d="M86.500.500h9v2l-3.500 6.500 3.500 6v3h-9v-3l3.500-6-3.500-6.500z" fill="#efebe3" stroke="#000" strokeWidth="1.500" />
      <path d="M889.500 0v10M889.500 10l4.500 5v3h-9v-3z" fill="#efebe3" stroke="#000" strokeWidth="1.500" />
    </svg>
  )
}

function VRuler() {
  // scrolled so that the first visible mark is at 3.2 inches
  return (
    <svg width="18" height="1200" className="block bg-white">
      {Array.from({ length: 44 }, (_, i) => i + 32).map(i => {
        const y = Math.round(96 + ((i - 40) * INCH) / 10)
        if (i % 10 === 0) {
          return (
            <text key={i} x="14" y={y} transform={`rotate(-90 14 ${y})`} textAnchor="middle" fontSize="13" fontFamily="DejaVu Sans" fill="#3c3b37">
              {i / 10}
            </text>
          )
        }
        return <rect key={i} x={i % 5 === 0 ? 8 : 9} y={y} width={i % 5 === 0 ? 3 : 1} height="1" fill="#2e2c28" />
      })}
    </svg>
  )
}

/* ---------- document ---------- */

function Line({ text }: { text: string }) {
  return (
    <span className="block whitespace-nowrap">
      {text.split(/(Sola|mastodonian)/).map((part, i) =>
        i % 2 ? <span key={i} className="underline decoration-[#f00] decoration-wavy decoration-1 underline-offset-2">{part}</span> : part,
      )}
    </span>
  )
}

function Page() {
  return (
    <div className="w-[983px] shrink-0 overflow-hidden border-l border-r-3 border-[#3c3b37] bg-white pl-[91px]">
      <article className="min-h-full w-[797px] border-x border-[#c0c0c0] pt-[68px] font-['Liberation_Serif',serif] text-[19px] leading-[22px] text-[#22211e]">
        <h1 className="relative mb-[10px] text-center text-[22px] leading-[26px] font-bold whitespace-nowrap text-[#3c3b37]">
          CHAPTER VII – CHILD-RAISING ON MARS
          <svg width="14" height="20" viewBox="0 0 14 20" className="absolute top-[13px] left-[627px]">
            <path d="M1.500 1.500v14l3.500-3 3 6 2.500-1-3-6h4.500z" fill="#fff" stroke="#222" strokeWidth="1.300" />
          </svg>
        </h1>
        {PARAGRAPHS.map((lines, i) => (
          <p key={i} className="mb-[10px]">
            {lines.map(l => <Line key={l} text={l} />)}
          </p>
        ))}
      </article>
    </div>
  )
}

function Tri({ d }: { d: string }) {
  return <svg width="7" height="7" viewBox="0 0 7 7"><path d={d} fill="#6b675f" /></svg>
}

function VScroll() {
  const small = 'flex h-[15px] w-[15px] items-center justify-center rounded-[3px] border border-[#8f7f68] bg-[#b9ab95]'
  return (
    <div className="flex w-[17px] shrink-0 flex-col bg-[#b5a691]">
      <div className="flex min-h-0 flex-1 flex-col rounded-t-[6px] rounded-b-[6px] border-l border-[#b9ab95] bg-linear-to-r from-[#ddd4c5] to-[#fbf9f6]">
        <button aria-label="Scroll up" className="flex h-[20px] items-center justify-center"><Tri d="M3.500 0L7 6H0z" /></button>
        <div className="mt-[92px] flex h-[36px] flex-col items-center justify-center gap-[2px] rounded-[7px] border border-[#b0a085] bg-linear-to-r from-white to-[#e3dac9]">
          <div className="h-px w-[6px] bg-[#b9a988]" />
          <div className="h-px w-[6px] bg-[#b9a988]" />
          <div className="h-px w-[6px] bg-[#b9a988]" />
        </div>
        <button aria-label="Scroll down" className="mt-auto flex h-[20px] items-center justify-center"><Tri d="M0 0h7L3.500 6z" /></button>
      </div>
      <div className="flex flex-col items-center gap-px pt-px">
        <button aria-label="Previous page" className={small}>
          <svg width="7" height="9"><path d="M3.500 0L7 4H0zM3.500 4.500L7 8.500H0z" fill="#222" /></svg>
        </button>
        <button aria-label="Navigation" className={small}>
          <svg width="9" height="9"><circle cx="4.500" cy="4.500" r="3.500" fill="#7fa9d2" stroke="#1d4277" /><path d="M2 8l5-4v4z" fill="#2a5c94" /></svg>
        </button>
        <button aria-label="Next page" className={small}>
          <svg width="7" height="9"><path d="M3.500 4L7 0H0zM3.500 8.500L7 4.500H0z" fill="#222" /></svg>
        </button>
      </div>
    </div>
  )
}

function HScroll() {
  return (
    <div className="flex h-[17px] shrink-0">
      <div className="flex min-w-0 flex-1 rounded-r-[6px] border-t border-[#b9ab95] bg-linear-to-b from-[#ddd4c5] to-[#fbf9f6]">
        <button aria-label="Scroll left" className="flex w-[18px] items-center justify-center"><Tri d="M6 0v7L0 3.500z" /></button>
        <div className="flex min-w-0 flex-1 items-center justify-center gap-[2px] rounded-[7px] border border-[#b0a085] bg-linear-to-b from-white to-[#e3dac9]">
          <div className="h-[5px] w-px bg-[#b9a988]" />
          <div className="h-[5px] w-px bg-[#b9a988]" />
          <div className="h-[5px] w-px bg-[#b9a988]" />
        </div>
        <button aria-label="Scroll right" className="ml-[30px] flex w-[18px] items-center justify-center"><Tri d="M0 0v7L6 3.500z" /></button>
      </div>
      <div className="w-[17px]" />
    </div>
  )
}

/* ---------- styles window ---------- */

function Book({ label, active, children }: { label: string; active?: boolean; children: ReactNode }) {
  return (
    <button
      aria-label={label}
      className={clsx('flex h-[27px] w-[25px] items-center justify-center border', active ? 'rounded-[2px] border-[#9c8a72] bg-[#b5a691]' : 'border-transparent')}
    >
      <svg width="16" height="16" viewBox="0 0 16 16" fill="none">
        <rect x="2" y="1.500" width="13" height="13" rx="1" fill="#fff" stroke="#000" />
        <path d="M1.500 2v13" stroke="#000" strokeWidth="3" strokeDasharray="1 1" />
        {children}
      </svg>
    </button>
  )
}

function StylesPanel() {
  return (
    <aside className="flex w-[222px] shrink-0 flex-col border-2 border-t-0 border-[#2e2c28] bg-[#efebe3] pb-[3px]">
      <div className="mt-[2px] flex items-center pl-[2px]">
        <Book label="Paragraph Styles" active><path d="M8 4.500h4.500M9.500 4v8M11.500 4v8M8 5v3" stroke="#000" strokeWidth="1.200" /></Book>
        <Book label="Character Styles"><text x="5.500" y="12" fontSize="10" fontWeight="bold" fontFamily="DejaVu Sans" fill="#000">a</text></Book>
        <Book label="Frame Styles"><rect x="5.500" y="4.500" width="7" height="7" stroke="#000" strokeDasharray="2 1" /></Book>
        <Book label="Page Styles"><path d="M6.500 4.500h3l2 2v5.500h-5z" stroke="#000" /></Book>
        <Book label="List Styles"><path d="M6 5h2M9 5h4M6 8h2M9 8h4M6 11h2M9 11h4" stroke="#000" /></Book>
        <button aria-label="Fill Format Mode" className="ml-auto flex w-[25px] justify-center">
          <svg width="18" height="16" viewBox="0 0 18 16" fill="none">
            <path d="M2 9l6-6 6 6-5 6H5z" fill="#e3e4e1" stroke="#777" />
            <path d="M5 8V3c0-3 4-2 4 0v5" stroke="#777" />
            <path d="M11 5c4-1 5 2 5 8" stroke="#5b87bd" strokeWidth="2" />
          </svg>
        </button>
        <button aria-label="New Style from Selection" className="flex w-[25px] justify-center">
          <svg width="15" height="12" viewBox="0 0 15 12" fill="none">
            <path d="M2 1.500h4.500M4.500 1v10M6.500 1v10M2.500 2v3M3.500 2v3" stroke="#555" />
            <path d="M8 1.500h7M8 4.500h6M8 6.500h7M8 9.500h6" stroke="#777" />
          </svg>
        </button>
        <button aria-label="Style options" className="mr-[3px] flex w-[17px] justify-center"><Down /></button>
      </div>
      <ul className="mx-1 mt-[6px] min-h-0 flex-1 overflow-hidden bg-white pl-[2px] text-base leading-[19px] text-black">
        {STYLES.map(s => (
          <li key={s} className="h-[19px]">
            <button className={clsx('block font-light', s === 'Heading 3' && 'bg-[#808080]')}>{s}</button>
          </li>
        ))}
      </ul>
      <label className="relative mx-[2px] mt-[5px] block">
        <select aria-label="Style filter" className="h-[27px] w-full appearance-none rounded-[2px] border-2 border-[#a8987f] bg-linear-to-b from-[#ddd3c5] to-[#b3a38e] pl-[1px] text-base font-light text-black outline-none">
          <option>Automatic</option>
        </select>
        <svg width="6" height="17" className="pointer-events-none absolute top-[5px] right-[12px]">
          <path d="M3 0l3 6H0zM3 16l3-6H0z" fill="#5a5348" />
        </svg>
      </label>
    </aside>
  )
}

/* ---------- status bar ---------- */

function Cell({ className, children }: { className?: string; children?: ReactNode }) {
  return (
    <div className={clsx('flex h-[20px] shrink-0 items-center justify-center border border-[#3c3b37] whitespace-nowrap', className)}>
      {children}
    </div>
  )
}

function ZoomKnob({ plus }: { plus?: boolean }) {
  return (
    <button aria-label={plus ? 'Zoom in' : 'Zoom out'}>
      <svg width="12" height="12" viewBox="0 0 12 12" className="block">
        <circle cx="6" cy="6" r="5" fill="#d3e3f5" stroke="#5b6b80" />
        <path d={plus ? 'M3 6h6M6 3v6' : 'M3 6h6'} stroke="#14417b" strokeWidth="1.500" />
      </svg>
    </button>
  )
}

export default function App() {
  return (
    <div className="flex h-screen w-full min-w-0 flex-col overflow-hidden rounded-[6px] border border-[#3c3831] bg-[#efebe3] font-['DejaVu_Sans',sans-serif] text-[13px] text-[#3c3b37]">
      <header className="grid h-[22px] shrink-0 grid-cols-[1fr_auto_1fr] items-center bg-linear-to-b from-[#aa9b86] via-[#83755f] to-[#9a8b72] pl-[3px]">
        <div className="flex gap-[2px]">
          <WinButton label="Close"><path d="M2 2l7 7M9 2L2 9" stroke="#fff" strokeWidth="2.500" /></WinButton>
          <WinButton label="Minimize"><path d="M1 8h9" stroke="#fff" strokeWidth="2" /></WinButton>
          <WinButton label="Maximize"><rect x="2" y="2" width="7" height="7" stroke="#fff" strokeWidth="2" /></WinButton>
        </div>
        <h1 className="pl-[71px] font-bold whitespace-nowrap text-white [text-shadow:1px_1px_1px_#2b261e]">Untitled 2 - OpenOffice.org Writer</h1>
      </header>

      <div className="flex min-h-0 flex-1 flex-col border-x-2 border-[#f8f6f2]">
        <nav className="flex h-[34px] shrink-0 items-center gap-[19px] bg-[#3c3b37] pl-[10px] text-xl text-[#dfd8c8]">
          {MENUS.map(m => {
            const k = ACCESS_KEY[m] ?? 0
            return (
              <button key={m} className="whitespace-nowrap">
                {m.slice(0, k)}<u className="decoration-1 underline-offset-3">{m[k]}</u>{m.slice(k + 1)}
              </button>
            )
          })}
        </nav>

        <Bar className="pl-[3px]">
          <Grip />
          <div className="w-[8px] shrink-0" />
          <Tool label="New" menu><NewDoc /></Tool>
          <Tool label="Open"><OpenDoc /></Tool>
          <Tool label="Save"><SaveDoc /></Tool>
          <Tool label="E-mail"><Mail /></Tool>
          <Sep />
          <Tool label="Edit File"><EditDoc /></Tool>
          <Sep />
          <Tool label="Export as PDF"><Pdf /></Tool>
          <Tool label="Print"><Printer /></Tool>
          <Tool label="Page Preview"><Printer preview /></Tool>
          <Sep />
          <Tool label="Spelling"><Spell /></Tool>
          <Tool label="AutoSpellcheck" active><Spell auto /></Tool>
          <Sep />
          <Tool label="Cut"><Cut /></Tool>
          <Tool label="Copy"><Copy /></Tool>
          <Tool label="Paste" menu><Paste /></Tool>
          <Tool label="Format Paintbrush"><Brush /></Tool>
          <Sep />
          <Tool label="Undo" menu><Undo /></Tool>
          <Tool label="Redo" menu><Redo /></Tool>
          <Sep />
          <Tool label="Hyperlink"><Hyperlink /></Tool>
          <Tool label="Table" menu><Grid /></Tool>
          <Tool label="Show Draw Functions" active><DrawBrush /></Tool>
          <Sep />
          <Tool label="Find and Replace"><FindReplace /></Tool>
          <Tool label="Navigator"><Navigator /></Tool>
          <Tool label="Gallery" active><Gallery /></Tool>
          <Tool label="Data Sources"><DataSources /></Tool>
          <Tool label="Nonprinting Characters"><Pilcrow /></Tool>
          <Tool label="Zoom"><Zoom /></Tool>
          <Sep />
          <Tool label="Help"><Help /></Tool>
          <More />
        </Bar>

        <Bar className="pl-[8px]">
          <Grip />
          <div className="w-[7px] shrink-0" />
          <Tool label="Styles and Formatting" active><StylesIcon /></Tool>
          <div className="w-[9px] shrink-0" />
          <Combo label="Apply Style" value="Heading 3" className="w-[204px]" />
          <Combo label="Font Name" value="Times New Roman" className="w-[229px]" />
          <Combo label="Font Size" value="14" className="w-[91px]" />
          <Tool label="Bold" active><BlueA kind="b" /></Tool>
          <Tool label="Italic"><BlueA kind="i" /></Tool>
          <Tool label="Underline"><BlueA kind="u" /></Tool>
          <Sep />
          <Tool label="Align Left"><AlignLeft /></Tool>
          <Tool label="Centered" active><AlignCenter /></Tool>
          <Tool label="Align Right"><AlignRight /></Tool>
          <Tool label="Justified"><AlignJustify /></Tool>
          <Sep />
          <Tool label="Numbering"><Numbering /></Tool>
          <Tool label="Bullets"><Bullets /></Tool>
          <Tool label="Decrease Indent"><Outdent /></Tool>
          <Tool label="Increase Indent"><Indent /></Tool>
          <Sep />
          <Tool label="Font Color" menu><FontColor /></Tool>
          <Tool label="Highlighting" menu><Highlight /></Tool>
          <Tool label="Background Color" menu><BackColor /></Tool>
          <More />
        </Bar>

        <Bar className="pl-[461px]">
          <Grip />
          <div className="w-[5px] shrink-0" />
          <Tool label="Insert Table" menu><Grid /></Tool>
          <Tool label="Insert Section" menu><SectionIcon /></Tool>
          <Tool label="Insert Frame" menu><FrameIcon /></Tool>
          <Sep />
          <Tool label="Footnote"><Footnote /></Tool>
          <Tool label="Caption"><Caption /></Tool>
          <Tool label="Note"><Note /></Tool>
          <Tool label="Bookmark"><Pin /></Tool>
          <Sep />
          <Tool label="Index Entry" menu><Index /></Tool>
          <Tool label="Cross-reference"><Bookmark /></Tool>
          <Tool label="Go to" menu><GotoIcon /></Tool>
          <Tool label="Form Controls" menu><FormIcon /></Tool>
          <Sep />
          <Tool label="From File"><Shapes /></Tool>
          <Tool label="Movie and Sound"><Media /></Tool>
          <Tool label="Formula"><Formula /></Tool>
          <Tool label="Chart"><Chart /></Tool>
          <Sep />
          <span className="w-[138px] shrink-0 pl-1 whitespace-nowrap">Indexes and Tables</span>
          <Tool label="Indexes and Tables"><IndexList /></Tool>
          <More />
        </Bar>

        <main className="mr-[2px] flex min-h-0 flex-1 border-t-2 border-[#2e2c28]">
          <div className="flex min-w-0 flex-1 flex-col">
            <div className="flex h-[5px] shrink-0 items-start justify-center border-l border-[#2e2c28] pt-px">
              <svg width="34" height="3"><path d="M0 0h4L2 2zM30 0h4L32 2z" fill="#000" /><path d="M8 1h19" stroke="#000" strokeWidth="2" strokeDasharray="2 2" /></svg>
            </div>
            <div className="flex min-h-0 flex-1 flex-col border-t border-r border-b border-l-2 border-black">
              <div className="flex min-h-0 flex-1">
                <div className="flex min-w-0 flex-1 flex-col">
                  <div className="flex h-[26px] shrink-0 items-center overflow-hidden pl-[3px]">
                    <button aria-label="Tab type" className="flex h-[18px] w-[19px] shrink-0 items-center justify-center border-2 border-[#2e2c28]">
                      <svg width="7" height="7"><path d="M1 0v6h6" fill="none" stroke="#2e2c28" strokeWidth="2" /></svg>
                    </button>
                    <div className="w-[50px] shrink-0" />
                    <HRuler />
                  </div>
                  <div className="flex min-h-0 flex-1 overflow-hidden">
                    <div className="w-[25px] shrink-0 overflow-hidden pt-[2px] pl-[3px]"><VRuler /></div>
                    <div className="flex min-w-0 flex-1 overflow-hidden border-t-2 border-l-2 border-[#3c3b37] pl-[45px]">
                      <Page />
                    </div>
                  </div>
                </div>
                <VScroll />
              </div>
              <HScroll />
            </div>
          </div>
          <div className="flex w-[6px] shrink-0 items-center justify-center border-b border-black">
            <svg width="3" height="34"><path d="M0 0v4l2-2zM0 30v4l2-2z" fill="#000" /><path d="M1 8v19" stroke="#000" strokeWidth="2" strokeDasharray="2 2" /></svg>
          </div>
          <StylesPanel />
        </main>

        <Bar className="pl-[3px]">
          <Grip />
          <div className="w-[6px] shrink-0" />
          <Tool label="Select"><PointerIcon /></Tool>
          <Sep />
          <Tool label="Line"><LineIcon /></Tool>
          <Tool label="Rectangle"><RectIcon /></Tool>
          <Tool label="Ellipse"><EllipseIcon /></Tool>
          <Tool label="Freeform Line"><Freeform /></Tool>
          <Tool label="Text"><TextTool /></Tool>
          <Tool label="Callouts"><Callout /></Tool>
          <Sep />
          <Tool label="Basic Shapes" menu><GreyRect /></Tool>
          <Tool label="Symbol Shapes" menu><Smiley /></Tool>
          <Tool label="Block Arrows" menu><Arrows /></Tool>
          <Tool label="Flowcharts" menu><Flow /></Tool>
          <Tool label="Callout Shapes" menu><Bubble /></Tool>
          <Tool label="Stars" menu><Star /></Tool>
          <Sep />
          <Tool label="Points"><Points /></Tool>
          <Sep />
          <Tool label="Fontwork Gallery"><Fontwork /></Tool>
          <Tool label="From File"><Shapes /></Tool>
          <Sep />
          <Tool label="Extrusion"><Extrude /></Tool>
          <More />
          <div className="w-[95px] shrink-0" />
          <Grip />
          <div className="w-[6px] shrink-0" />
          <Tool label="Align objects left"><AlignObj d="M1.500 1v22M3.500 1v22M3.500 4.500h11v6h-11zM3.500 14.500h17v6h-17z" /></Tool>
          <Tool label="Center horizontally"><AlignObj d="M11.500 1v22M13.500 1v22M6.500 4.500h12v6h-12zM3.500 14.500h18v6h-18z" /></Tool>
          <Tool label="Align objects right"><AlignObj d="M20.500 1v22M22.500 1v22M9.500 4.500h11v6h-11zM3.500 14.500h17v6h-17z" /></Tool>
          <Tool label="Align top"><AlignObj d="M1 1.500h22M1 3.500h22M4.500 3.500h6v17h-6zM14.500 3.500h6v11h-6z" /></Tool>
          <Tool label="Center vertically"><AlignObj d="M1 11.500h22M1 13.500h22M4.500 3.500h6v18h-6zM14.500 6.500h6v12h-6z" /></Tool>
          <Tool label="Align bottom"><AlignObj d="M1 20.500h22M1 22.500h22M3.500 1.500h6v19h-6zM13.500 8.500h6v12h-6z" /></Tool>
          <More />
        </Bar>

        <footer className="flex h-[25px] shrink-0 items-center gap-1 overflow-hidden pr-[5px] pb-[1px] pl-[5px]">
          <Cell className="w-[196px] justify-start pl-[4px]">Page 24 / 105</Cell>
          <Cell className="w-[155px] justify-start pl-[4px]">Default</Cell>
          <Cell className="w-[233px]">English (USA)</Cell>
          <Cell className="w-[48px]">INSRT</Cell>
          <Cell className="w-[35px]">STD</Cell>
          <Cell className="w-[18px]">
            <svg width="13" height="15" viewBox="0 0 13 15">
              <path d="M1.500.500h7l3 3v11h-10z" fill="#fff" stroke="#888a85" />
              <path d="M5 3h3l-.500 6h-2zM5 10.500h3v2.500H5z" fill="#e8660c" />
            </svg>
          </Cell>
          <Cell className="w-[25px]" />
          <Cell className="min-w-[120px] flex-1">Outline 3</Cell>
          <Cell className="w-[72px] gap-[6px]">
            <svg width="9" height="12"><path d="M.500.500h5l3 3v8h-8z" fill="#f4f6fa" stroke="#777" /></svg>
            <svg width="20" height="12"><path d="M.500.500h6l3 3v8h-9zM10.500.500h6l3 3v8h-9z" fill="#b9d4f5" stroke="#14417b" /></svg>
            <svg width="18" height="12"><path d="M2.500.500h6v11h-8v-9zM8.500.500h6l3 2v9h-9z" fill="#f4f6fa" stroke="#777" /></svg>
          </Cell>
          <Cell className="w-[139px] gap-[5px]">
            <ZoomKnob />
            <span className="relative flex h-[16px] w-[97px] items-center">
              <span className="absolute inset-x-0 top-[7px] h-[2px] border-t border-[#8b887f] bg-white" />
              <span className="absolute top-[3px] left-[15px] h-[10px] w-px bg-[#8b887f]" />
              <span className="absolute top-[3px] left-[48px] h-[10px] w-px bg-[#8b887f]" />
              <input
                type="range"
                aria-label="Zoom"
                defaultValue={50}
                className="relative h-[8px] w-full appearance-none bg-transparent [&::-webkit-slider-thumb]:h-[8px] [&::-webkit-slider-thumb]:w-[8px] [&::-webkit-slider-thumb]:appearance-none [&::-webkit-slider-thumb]:rounded-full [&::-webkit-slider-thumb]:border [&::-webkit-slider-thumb]:border-[#1d3a5c] [&::-webkit-slider-thumb]:bg-[#3f78b5]"
              />
            </span>
            <ZoomKnob plus />
          </Cell>
          <Cell className="w-[45px]">120%</Cell>
        </footer>
      </div>
    </div>
  )
}
